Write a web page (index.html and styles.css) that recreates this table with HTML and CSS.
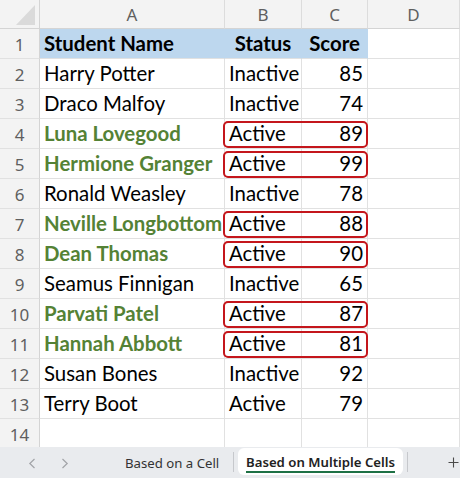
FILE: index.html
```html
<!DOCTYPE html>
<html>
<head>
<meta charset="utf-8">
<link rel="stylesheet" href="styles.css">
</head>
<body>
<div class="app">
  <div class="sheet">
    <div class="row head">
      <div class="corner"><span class="tri"></span></div>
      <div class="colh">A</div>
      <div class="colh">B</div>
      <div class="colh">C</div>
      <div class="colh">D</div>
    </div>
    <div class="row">
      <div class="rowh">1</div>
      <div class="cell hdr">Student Name</div>
      <div class="cell hdr mid">Status</div>
      <div class="cell hdr mid">Score</div>
      <div class="cell"></div>
    </div>
    <div class="row">
      <div class="rowh">2</div>
      <div class="cell">Harry Potter</div>
      <div class="cell">Inactive</div>
      <div class="cell num">85</div>
      <div class="cell"></div>
    </div>
    <div class="row">
      <div class="rowh">3</div>
      <div class="cell">Draco Malfoy</div>
      <div class="cell">Inactive</div>
      <div class="cell num">74</div>
      <div class="cell"></div>
    </div>
    <div class="row">
      <div class="rowh">4</div>
      <div class="cell green">Luna Lovegood</div>
      <div class="cell">Active</div>
      <div class="cell num">89</div>
      <div class="cell"></div>
      <div class="hl"></div>
    </div>
    <div class="row">
      <div class="rowh">5</div>
      <div class="cell green">Hermione Granger</div>
      <div class="cell">Active</div>
      <div class="cell num">99</div>
      <div class="cell"></div>
      <div class="hl"></div>
    </div>
    <div class="row">
      <div class="rowh">6</div>
      <div class="cell">Ronald Weasley</div>
      <div class="cell">Inactive</div>
      <div class="cell num">78</div>
      <div class="cell"></div>
    </div>
    <div class="row">
      <div class="rowh">7</div>
      <div class="cell green">Neville Longbottom</div>
      <div class="cell">Active</div>
      <div class="cell num">88</div>
      <div class="cell"></div>
      <div class="hl"></div>
    </div>
    <div class="row">
      <div class="rowh">8</div>
      <div class="cell green">Dean Thomas</div>
      <div class="cell">Active</div>
      <div class="cell num">90</div>
      <div class="cell"></div>
      <div class="hl"></div>
    </div>
    <div class="row">
      <div class="rowh">9</div>
      <div class="cell">Seamus Finnigan</div>
      <div class="cell">Inactive</div>
      <div class="cell num">65</div>
      <div class="cell"></div>
    </div>
    <div class="row">
      <div class="rowh">10</div>
      <div class="cell green">Parvati Patel</div>
      <div class="cell">Active</div>
      <div class="cell num">87</div>
      <div class="cell"></div>
      <div class="hl"></div>
    </div>
    <div class="row">
      <div class="rowh">11</div>
      <div class="cell green">Hannah Abbott</div>
      <div class="cell">Active</div>
      <div class="cell num">81</div>
      <div class="cell"></div>
      <div class="hl"></div>
    </div>
    <div class="row">
      <div class="rowh">12</div>
      <div class="cell">Susan Bones</div>
      <div class="cell">Inactive</div>
      <div class="cell num">92</div>
      <div class="cell"></div>
    </div>
    <div class="row">
      <div class="rowh">13</div>
      <div class="cell">Terry Boot</div>
      <div class="cell">Active</div>
      <div class="cell num">79</div>
      <div class="cell"></div>
    </div>
    <div class="row">
      <div class="rowh">14</div>
      <div class="cell"></div>
      <div class="cell"></div>
      <div class="cell"></div>
      <div class="cell"></div>
    </div>
  </div>
  <div class="tabbar">
    <div class="nav">
      <svg width="8" height="11" viewBox="0 0 8 11"><path d="M6.5 1 L1.8 5.5 L6.5 10" fill="none" stroke="#a2a4a8" stroke-width="1.2"/></svg>
      <svg width="8" height="11" viewBox="0 0 8 11"><path d="M1.5 1 L6.2 5.5 L1.5 10" fill="none" stroke="#a2a4a8" stroke-width="1.2"/></svg>
    </div>
    <div class="tab first">Based on a Cell</div>
    <div class="sep"></div>
    <div class="tab active"><span class="lbl">Based on Multiple Cells</span></div>
    <div class="sep"></div>
    <div class="add">
      <svg width="11" height="11" viewBox="0 0 11 11"><path d="M5.5 0.5 V10.5 M0.5 5.5 H10.5" stroke="#4a4a4a" stroke-width="1.1" fill="none"/></svg>
    </div>
  </div>
</div>
</body>
</html>
```

FILE: styles.css
```css
* { box-sizing: border-box; }
html, body { margin: 0; padding: 0; }
body {
  width: 460px;
  height: 478px;
  overflow: hidden;
  background: #ffffff;
  font-family: Lato, "Liberation Sans", sans-serif;
}
.app {
  display: flex;
  flex-direction: column;
  height: 478px;
}
.sheet {
  height: 447px;
  overflow: hidden;
  display: flex;
  flex-direction: column;
}
.row {
  display: grid;
  grid-template-columns: 40px 185px 77px 66px 1fr;
  height: 30px;
  flex: none;
}
.row.head { height: 29px; }
.row > * { grid-row: 1; min-width: 0; }
.row > :nth-child(1) { grid-column: 1; }
.row > :nth-child(2) { grid-column: 2; }
.row > :nth-child(3) { grid-column: 3; }
.row > :nth-child(4) { grid-column: 4; }
.row > :nth-child(5) { grid-column: 5; }
.row > .hl { grid-column: 3 / 5; }

.corner {
  background: #f3f3f3;
  border-right: 1px solid #d4d4d4;
  border-bottom: 1px solid #d4d4d4;
  position: relative;
}
.tri {
  position: absolute;
  left: 16px;
  top: 5px;
  width: 19px;
  height: 20px;
  background: #dadada;
  clip-path: polygon(100% 0, 100% 100%, 0 100%);
}
.colh {
  background: #f3f3f3;
  border-right: 1px solid #dcdcdc;
  border-bottom: 1px solid #d4d4d4;
  color: #5f5f5f;
  font-family: "Noto Sans", "Open Sans", sans-serif;
  font-size: 17px;
  display: flex;
  align-items: center;
  justify-content: center;
  padding-top: 1px;
}
.rowh {
  background: #f3f3f3;
  border-right: 1px solid #d4d4d4;
  border-bottom: 1px solid #e1e1e1;
  color: #5f5f5f;
  font-family: "Noto Sans", "Open Sans", sans-serif;
  font-size: 17px;
  display: flex;
  align-items: center;
  justify-content: center;
  padding-top: 1px;
}
.cell {
  border-right: 1px solid #e1e1e1;
  border-bottom: 1px solid #e1e1e1;
  padding: 0 4px;
  font-size: 20.4px;
  line-height: 29px;
  color: #000;
  white-space: nowrap;
  overflow: hidden;
}
.cell.num { text-align: right; }
.cell.mid { text-align: center; }
.cell.hdr {
  background: #bdd7ee;
  border-right-color: #bdd7ee;
  font-weight: bold;
}
.cell.green {
  color: #548235;
  font-weight: bold;
}
.hl {
  margin: 2px 0 1px -2px;
  border: 2px solid #c4161c;
  border-radius: 5px;
}

.tabbar {
  height: 31px;
  background: #e9ebee;
  display: flex;
  align-items: stretch;
  font-family: "Noto Sans", "Open Sans", sans-serif;
  font-size: 13px;
  color: #333;
  flex: none;
}
.nav {
  width: 125px;
  display: flex;
  align-items: center;
  gap: 25px;
  padding-left: 28px;
  padding-top: 1px;
}
.tab {
  display: flex;
  align-items: center;
  padding-top: 1px;
}
.tab.first { width: 108px; font-size: 13.2px; }
.tab.active {
  background: #ffffff;
  margin: 1px 4px 3px 4px;
  border-radius: 6px;
  padding: 0 8px;
  font-size: 13.2px;
  font-weight: 600;
  color: #222;
}
.tab.active .lbl {
  border-bottom: 2px solid #1e7145;
  padding-top: 2px;
  line-height: 18px;
}
.sep {
  width: 1px;
  background: #c6c8cc;
  margin: 5px 0 6px;
}
.add {
  flex: 1;
  display: flex;
  align-items: center;
  justify-content: flex-end;
  margin-right: 1px;
}
```
